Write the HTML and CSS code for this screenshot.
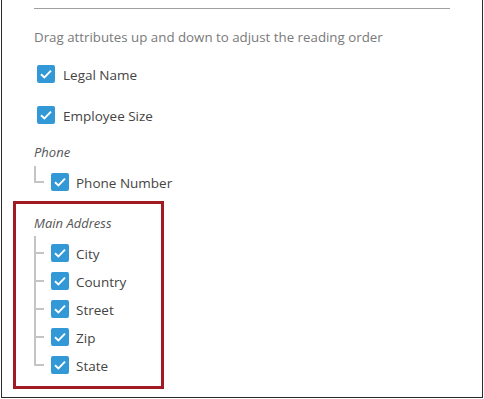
FILE: index.html
```html
<!DOCTYPE html>
<html>
<head>
<meta charset="utf-8">
<link rel="stylesheet" href="styles.css">
</head>
<body>
<div class="frame">
  <div class="rule"></div>
  <p class="desc">Drag attributes up and down to adjust the reading order</p>

  <div class="row first">
    <span class="cb"><svg viewBox="0 0 18 18"><path d="M4 9.2 L7.4 12.4 L14 5.6"/></svg></span>
    <span class="label">Legal Name</span>
  </div>
  <div class="row second">
    <span class="cb"><svg viewBox="0 0 18 18"><path d="M4 9.2 L7.4 12.4 L14 5.6"/></svg></span>
    <span class="label">Employee Size</span>
  </div>

  <div class="group phone">
    <div class="group-title">Phone</div>
    <div class="children">
      <div class="row child last">
        <span class="cb"><svg viewBox="0 0 18 18"><path d="M4 9.2 L7.4 12.4 L14 5.6"/></svg></span>
        <span class="label">Phone Number</span>
      </div>
    </div>
  </div>

  <div class="group address">
    <div class="group-title">Main Address</div>
    <div class="children">
      <div class="row child">
        <span class="cb"><svg viewBox="0 0 18 18"><path d="M4 9.2 L7.4 12.4 L14 5.6"/></svg></span>
        <span class="label">City</span>
      </div>
      <div class="row child">
        <span class="cb"><svg viewBox="0 0 18 18"><path d="M4 9.2 L7.4 12.4 L14 5.6"/></svg></span>
        <span class="label">Country</span>
      </div>
      <div class="row child">
        <span class="cb"><svg viewBox="0 0 18 18"><path d="M4 9.2 L7.4 12.4 L14 5.6"/></svg></span>
        <span class="label">Street</span>
      </div>
      <div class="row child">
        <span class="cb"><svg viewBox="0 0 18 18"><path d="M4 9.2 L7.4 12.4 L14 5.6"/></svg></span>
        <span class="label">Zip</span>
      </div>
      <div class="row child last">
        <span class="cb"><svg viewBox="0 0 18 18"><path d="M4 9.2 L7.4 12.4 L14 5.6"/></svg></span>
        <span class="label">State</span>
      </div>
    </div>
  </div>
</div>
</body>
</html>
```

FILE: styles.css
```css
* { box-sizing: border-box; }
html, body { margin: 0; padding: 0; background: #fff; }
body {
  font-family: "Open Sans", "Noto Sans", sans-serif;
  font-size: 13px;
  color: #444;
}
.frame {
  margin-left: 1px;
  width: 482px;
  height: 398px;
  border: 1px solid #2a2a2a;
  border-top: none;
  padding-left: 32px;
  overflow: hidden;
}
.rule {
  margin-top: 8px;
  width: 416px;
  height: 1px;
  background: #a0a0a0;
}
.desc {
  margin: 18px 0 0;
  line-height: 20px;
  height: 20px;
  color: #7a7a7a;
  font-size: 13.3px;
  white-space: nowrap;
}
.row {
  display: flex;
  align-items: center;
  height: 18px;
  margin-left: 3px;
}
.row.first { margin-top: 18px; }
.row.second { margin-top: 23px; }
.cb {
  width: 18px;
  height: 18px;
  flex: none;
  background: #3399d6;
  border-radius: 2px;
  display: block;
}
.cb svg {
  display: block;
  width: 18px;
  height: 18px;
  fill: none;
  stroke: #fff;
  stroke-width: 1.9;
  stroke-linecap: butt;
  stroke-linejoin: miter;
}
.label {
  margin-left: 8px;
  font-size: 13.5px;
  color: #444;
  line-height: 18px;
  padding-top: 2px;
}
.group-title {
  font-style: italic;
  color: #555;
  font-size: 13px;
  line-height: 20px;
  height: 20px;
}
.phone { margin-top: 18px; }
.phone .children { margin-top: 11px; }
.address {
  margin-top: 10px;
  margin-left: -21px;
  width: 151px;
  height: 188px;
  border: 3px solid #a01b24;
  padding: 9px 0 0 18px;
}
.address .children { margin-top: 11px; }
.address .row.child + .row.child { margin-top: 10px; }
.row.child {
  position: relative;
  margin-left: 17px;
}
.row.child .label { margin-left: 7px; }
.row.child::before {
  content: "";
  position: absolute;
  left: -17px;
  top: -17px;
  width: 2px;
  height: 28px;
  background: #c4c4c4;
}
.address .row.child::before { top: -10px; height: 28px; }
.address .row.child:first-child::before { top: -8px; height: 26px; }
.row.child.last::before { height: 27px; }
.address .row.child.last::before { height: 20px; }
.phone .row.child.last::before { top: -7px; height: 17px; }
.row.child::after {
  content: "";
  position: absolute;
  left: -17px;
  top: 8px;
  width: 10px;
  height: 2px;
  background: #c4c4c4;
}
```
